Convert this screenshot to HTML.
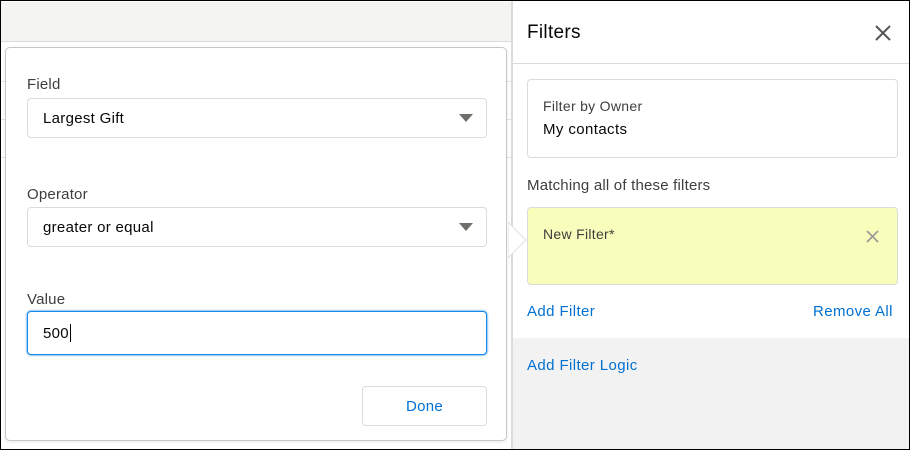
<!DOCTYPE html><html><head><style>
*{box-sizing:border-box;margin:0;padding:0}
body{width:910px;height:450px;overflow:hidden;font-family:"Liberation Sans",sans-serif;background:#fff;position:relative}
.a{position:absolute}
.lbl{font-size:15px;color:#3e3e3c;letter-spacing:.2px}
.sel{border:1px solid #dddbda;border-radius:4px;background:#fff;font-size:15px;color:#080707;padding-left:15px;display:flex;align-items:center;letter-spacing:.3px}
.tri{position:absolute;right:13px;top:50%;margin-top:-4px;width:0;height:0;border-left:7px solid transparent;border-right:7px solid transparent;border-top:8px solid #706e6b}
.link{color:#0070d2;font-size:15px;letter-spacing:.4px}
</style></head><body>
<div class="a" style="left:0;top:0;width:910px;height:450px;border:1px solid #000;z-index:10;pointer-events:none"></div>
<div class="a" style="left:1px;top:2px;width:510px;height:40px;background:#f4f4f2;border-bottom:1px solid #dddbda"></div>
<div class="a" style="left:0;top:81px;width:511px;height:1px;background:#e5e5e5"></div>
<div class="a" style="left:0;top:119px;width:511px;height:1px;background:#e5e5e5"></div>
<div class="a" style="left:0;top:157px;width:511px;height:1px;background:#e5e5e5"></div>
<div class="a" style="left:5px;top:47px;width:502px;height:394px;border:1px solid #c9c7c5;border-radius:5px;background:#fff;box-shadow:0 1px 3px rgba(0,0,0,.1)"></div>
<div class="a lbl" style="left:27px;top:76px">Field</div>
<div class="a sel" style="left:27px;top:98px;width:460px;height:40px">Largest Gift<span class="tri"></span></div>
<div class="a lbl" style="left:27px;top:186px">Operator</div>
<div class="a sel" style="left:27px;top:207px;width:460px;height:40px">greater or equal<span class="tri"></span></div>
<div class="a lbl" style="left:27px;top:291px">Value</div>
<div class="a sel" style="left:27px;top:311px;width:460px;height:44px;border:1px solid #1589ee;box-shadow:0 0 2px #0070d2">500<span style="display:inline-block;width:1px;height:18px;background:#000;margin-left:1px"></span></div>
<div class="a" style="left:362px;top:386px;width:125px;height:40px;border:1px solid #dddbda;border-radius:4px;color:#0070d2;font-size:15px;display:flex;align-items:center;justify-content:center;letter-spacing:.3px">Done</div>
<div class="a" style="left:511px;top:0;width:399px;height:450px;background:#f3f2f2;border-left:2px solid #dddbda"></div>
<div class="a" style="left:513px;top:0;width:397px;height:338px;background:#fff"></div>
<div class="a" style="left:513px;top:63px;width:397px;height:1px;background:#dddbda"></div>
<div class="a" style="left:527px;top:22px;font-size:19px;color:#080707;letter-spacing:.3px">Filters</div>
<svg class="a" style="left:875px;top:25px" width="16" height="16"><path d="M1 1L15 15M15 1L1 15" stroke="#555" stroke-width="2"/></svg>
<div class="a" style="left:527px;top:79px;width:371px;height:79px;border:1px solid #dddbda;border-radius:4px"></div>
<div class="a" style="left:543px;top:98px;font-size:14px;color:#3e3e3c;letter-spacing:.3px">Filter by Owner</div>
<div class="a" style="left:543px;top:121px;font-size:15px;color:#080707;letter-spacing:.4px">My contacts</div>
<div class="a lbl" style="left:527px;top:177px">Matching all of these filters</div>
<div class="a" style="left:527px;top:207px;width:371px;height:78px;border:1px solid #dddbda;border-radius:4px;background:#f9fdbb"></div>
<svg class="a" style="left:508px;top:222px" width="22" height="40"><path d="M0 0L18 18L0 36Z" fill="#fff" stroke="#e0e0e0" stroke-width="1"/></svg>
<div class="a" style="left:543px;top:226px;font-size:14px;color:#3e3e3c;letter-spacing:.3px">New Filter*</div>
<svg class="a" style="left:866px;top:230px" width="13" height="13"><path d="M1 1L12 12M12 1L1 12" stroke="#999" stroke-width="1.6"/></svg>
<div class="a link" style="left:527px;top:303px">Add Filter</div>
<div class="a link" style="left:813px;top:303px">Remove All</div>
<div class="a link" style="left:527px;top:357px">Add Filter Logic</div>
</body></html>
